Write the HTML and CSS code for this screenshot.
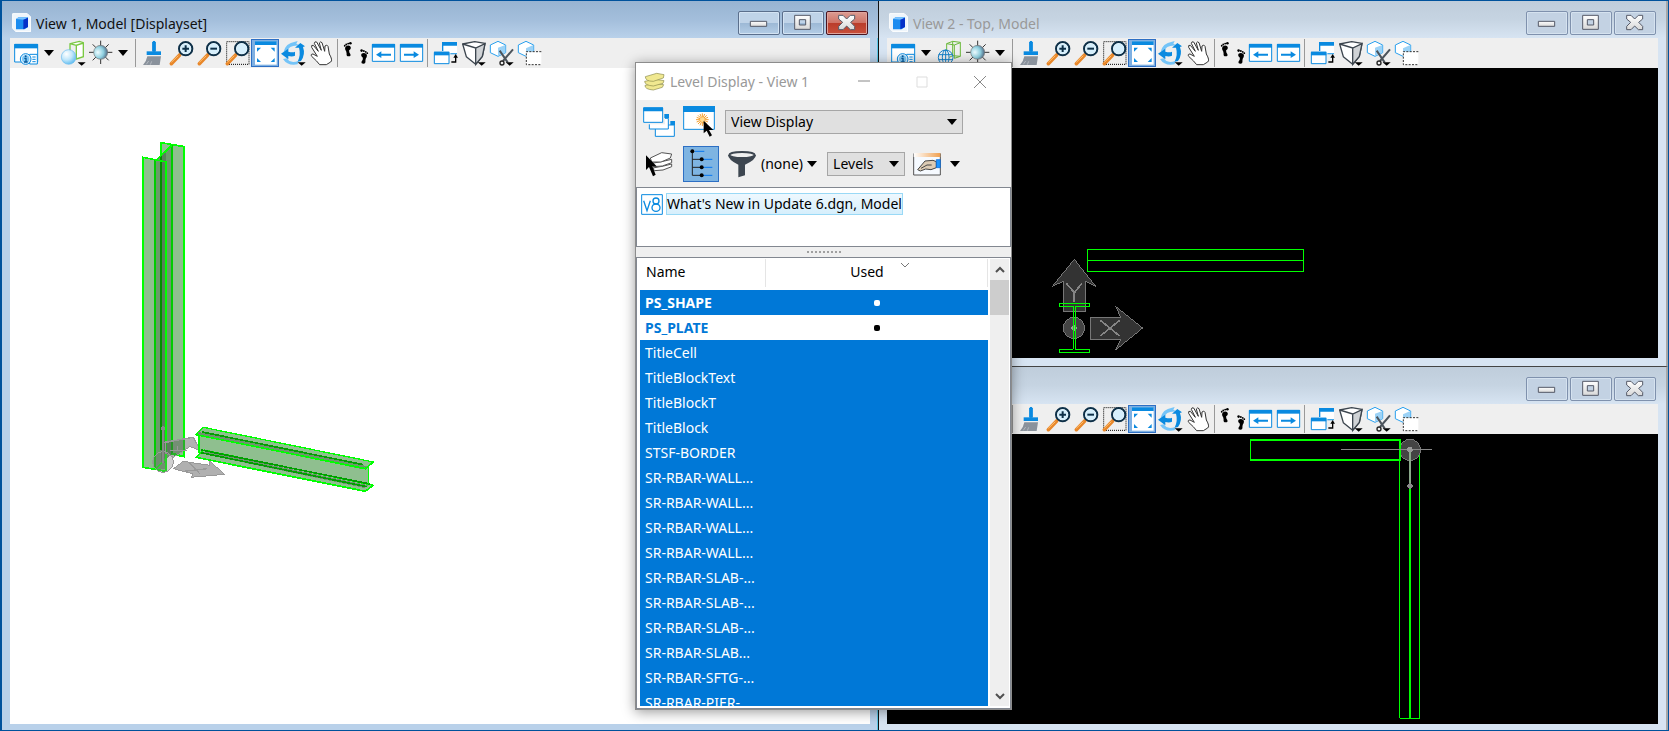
FILE: index.html
```html
<!DOCTYPE html>
<html lang="en">
<head>
<meta charset="utf-8">
<title>Model views</title>
<link rel="stylesheet" href="styles.css">
</head>
<body>
<svg class="defs" aria-hidden="true">
  <defs>
    <radialGradient id="ball" cx=".35" cy=".3" r=".8"><stop offset="0" stop-color="#fff"/><stop offset=".5" stop-color="#bfe6fb"/><stop offset="1" stop-color="#4db4ec"/></radialGradient>
    <radialGradient id="sunfill" cx=".3" cy=".5" r=".8"><stop offset="0" stop-color="#eefcff"/><stop offset=".5" stop-color="#8fd0e0"/><stop offset="1" stop-color="#3b4664"/></radialGradient>
    <linearGradient id="glyph" x2="0" y2="1"><stop offset="0" stop-color="#fff"/><stop offset="1" stop-color="#d8d8d8"/></linearGradient>
    <linearGradient id="orange" x2="1"><stop offset="0" stop-color="#fff"/><stop offset="1" stop-color="#f0a050"/></linearGradient>
  </defs>
  <symbol id="more" viewBox="0 0 84 84"><path d="M56 70H80L68 80Z" fill="#000"/></symbol>
  <symbol id="arrow" viewBox="0 0 10 6"><path d="M0 0H10L5 6Z" fill="#000"/></symbol>
  <symbol id="model" viewBox="0 0 57 57"><path d="M2 2H46L56 12V56H12L2 46Z" fill="#eef5fb" stroke="#fff" stroke-width="3"/><path d="M12 18L20 13H48V42L38 49H12Z" fill="#1b8cf0"/><path d="M12 18L20 13H48L38 20Z" fill="#7cc4ff"/><path d="M34 20L48 14V42L34 49Z" fill="#0430c8"/></symbol>
  <symbol id="info" viewBox="0 0 84 84"><path d="M5 16H74V69H5Z" fill="#fff" stroke="#0a8ae0" stroke-width="3"/><path d="M4 15H75V28H4Z" fill="#0a8ae0"/><path d="M50 46H73V75H50Z" fill="#fff" stroke="#0a8ae0" stroke-width="3"/><path d="M58 54H68M58 61H68M58 68H68" stroke="#0a8ae0" stroke-width="3"/><circle cx="38" cy="60" r="16" fill="#e4f4ff" stroke="#0a8ae0" stroke-width="3"/><circle cx="38" cy="60" r="11" fill="#7cc6f4"/><path d="M34 58H39V68M33 69H44" fill="none" stroke="#075a9c" stroke-width="4"/><circle cx="38" cy="52" r="3" fill="#075a9c"/></symbol>
  <symbol id="shaded" viewBox="0 0 84 84"><path d="M33 14L61 7L73 11V55L52 62V19Z" fill="#fff"/><path d="M33 38V14L61 7L73 11V53L52 60V19L73 12M52 19L33 14" fill="none" stroke="#7ac943" stroke-width="4"/><circle cx="29" cy="54" r="22" fill="url(#ball)" stroke="#6cbcf0" stroke-width="2"/><use href="#more" width="84" height="84"/></symbol>
  <symbol id="wire" viewBox="0 0 84 84"><path d="M32 14L50 7L73 10V52L55 58V18L73 11M55 18L32 14V36M50 7V50L73 52M50 50L40 55" fill="none" stroke="#6ab83a" stroke-width="3"/><g fill="none" stroke="#1480c8" stroke-width="3"><circle cx="29" cy="55" r="22"/><ellipse cx="29" cy="55" rx="10" ry="22"/><path d="M8 47H50M8 62H50M29 33V77"/></g><use href="#more" width="84" height="84"/></symbol>
  <symbol id="sun" viewBox="0 0 84 84"><path d="M41 5V75M6 40H76M17 16L65 64M17 64L65 16" stroke="#333" stroke-width="3"/><circle cx="41" cy="40" r="21" fill="url(#sunfill)" stroke="#777" stroke-width="2"/></symbol>
  <symbol id="brush" viewBox="0 0 84 84"><path d="M41 9Q45 4 49 9V37H41Z" fill="#0a8ae0" stroke="#0a8ae0" stroke-width="3"/><path d="M23 37H66V48H23Z" fill="#0a8ae0"/><path d="M25 52H66L62 78H12Q22 68 25 52Z" fill="#8a929c"/><path d="M22 76L29 66M34 77L38 67" stroke="#c8ccd2" stroke-width="2"/></symbol>
  <symbol id="lens" viewBox="0 0 84 84"><path d="M13 74L38 48" stroke="#e8872a" stroke-width="11" stroke-linecap="round"/><path d="M13 70L34 50" stroke="#ffc070" stroke-width="3"/><circle cx="56" cy="29" r="20" fill="#f2fbff" stroke="#0e3048" stroke-width="6"/><circle cx="56" cy="29" r="16" fill="#d6effc"/></symbol>
  <symbol id="zoomin" viewBox="0 0 84 84"><use href="#lens" width="84" height="84"/><path d="M46 29H66M56 19V39" stroke="#0e3048" stroke-width="6"/></symbol>
  <symbol id="zoomout" viewBox="0 0 84 84"><use href="#lens" width="84" height="84"/><path d="M46 29H66" stroke="#0e3048" stroke-width="6"/></symbol>
  <symbol id="area" viewBox="0 0 84 84"><path d="M11 8H78V76H11Z" fill="none" stroke="#000" stroke-width="3" stroke-dasharray="3 3"/><use href="#lens" width="84" height="84"/></symbol>
  <symbol id="fit" viewBox="0 0 84 84"><path d="M12 8H77V77H12Z" fill="#fff"/><path d="M12 7H77V18H12Z" fill="#0a8ae0"/><path d="M18 26H30L18 38ZM71 26H59L71 38ZM18 69V57L30 69ZM71 69V57L59 69Z" fill="#0a8ae0"/></symbol>
  <symbol id="rotate" viewBox="0 0 84 84"><path d="M14 38Q20 12 48 8L56 6L52 14L64 20Q30 16 24 38Z" fill="#74c4f8"/><path d="M24 58Q32 74 58 66L56 76Q26 82 12 60Z" fill="#74c4f8"/><path d="M6 44L28 29V38Q42 42 48 38V50Q40 54 28 51V61Z" fill="#0a8ae0"/><path d="M48 26L64 12L78 22L72 24Q80 46 66 66L56 68Q66 46 60 26Z" fill="#0a8ae0"/><use href="#more" width="84" height="84"/></symbol>
  <symbol id="hand" viewBox="0 0 84 84"><path d="M38 77Q30 66 14 52Q10 45 18 45L31 52L14 25Q12 17 19 19L34 37L22 13Q23 6 29 9L43 34L37 12Q40 6 45 11L53 37L54 21Q60 15 63 22L67 45Q78 64 71 69L58 77Z" fill="#fff" stroke="#333" stroke-width="3" stroke-linejoin="round"/></symbol>
  <symbol id="foot" viewBox="0 0 28 48"><path d="M6 16Q14 9 21 15Q25 22 17 27Q16 33 21 39Q23 46 15 46Q8 46 9 36Q9 30 5 25Q3 20 6 16Z"/><circle cx="3" cy="13" r="3"/><circle cx="8" cy="9" r="3"/><circle cx="14" cy="6" r="3"/><circle cx="21" cy="5" r="4"/></symbol>
  <symbol id="walk" viewBox="0 0 84 84"><use href="#foot" x="8" y="8" width="27" height="46"/><use href="#foot" x="-82" y="30" width="27" height="46" transform="scale(-1 1)"/></symbol>
  <symbol id="frame" viewBox="0 0 84 84"><path d="M10 16H77V67H10Z" fill="#fff" stroke="#0a8ae0" stroke-width="3"/><path d="M9 15H78V26H9Z" fill="#0a8ae0"/></symbol>
  <symbol id="prev" viewBox="0 0 84 84"><use href="#frame" width="84" height="84"/><path d="M21 47L37 37V44H66V50H37V57Z" fill="#0a8ae0"/></symbol>
  <symbol id="next" viewBox="0 0 84 84"><use href="#frame" width="84" height="84"/><path d="M66 47L50 37V44H21V50H50V57Z" fill="#0a8ae0"/></symbol>
  <symbol id="copyview" viewBox="0 0 84 84"><path d="M34 12H78V44H34Z" fill="#fff"/><path d="M33 9H78V20H33ZM33 20H37V36H33ZM58 43H78V46H58Z" fill="#0a8ae0"/><path d="M10 40H54V74H10Z" fill="#fff" stroke="#0a8ae0" stroke-width="3"/><path d="M9 38H55V49H9Z" fill="#0a8ae0"/><path d="M61 69H74V53" fill="none" stroke="#000" stroke-width="4"/><path d="M74 45L81 56H67Z"/></symbol>
  <symbol id="persp" viewBox="0 0 84 84"><path d="M11 15L47 8L78 13L70 52L50 76L22 53Z" fill="#fff" stroke="#3c454e" stroke-width="4" stroke-linejoin="round"/><path d="M50 26L78 14L70 52L50 76Z" fill="#d0d3d6"/><path d="M11 15L50 27L78 14L70 52L50 76V27" fill="none" stroke="#3c454e" stroke-width="4"/><use href="#more" width="84" height="84"/></symbol>
  <symbol id="clip" viewBox="0 0 84 84"><path d="M33 7L56 18V41L33 52L10 41V18Z" fill="#fff" stroke="#2aa0ee" stroke-width="3"/><path d="M33 26L55 18V41L33 51Z" fill="#9cd2f6"/><path d="M78 31L48 66M38 35L62 70" stroke="#4c545c" stroke-width="6"/><circle cx="45" cy="72" r="6" fill="none" stroke="#222" stroke-width="4"/><use href="#more" width="84" height="84"/></symbol>
  <symbol id="mask" viewBox="0 0 84 84"><path d="M33 7L56 18V41L33 52L10 41V18Z" fill="#fff" stroke="#2aa0ee" stroke-width="3"/><path d="M33 28L55 18V41H33Z" fill="#9cd2f6"/><path d="M34 38H79V77H34Z" fill="#fff"/><path d="M79 38H34V77H79" fill="none" stroke="#333" stroke-width="3" stroke-dasharray="6 4"/></symbol>
  <symbol id="wmin" viewBox="0 0 126 72"><path d="M37 31H86V46H37Z" fill="url(#glyph)" stroke="#555a68" stroke-width="3"/></symbol>
  <symbol id="wmax" viewBox="0 0 126 72"><path fill-rule="evenodd" d="M38 13H85V55H38ZM52 26V42H71V26Z" fill="url(#glyph)" stroke="#555a68" stroke-width="3"/></symbol>
  <symbol id="wclose" viewBox="0 0 126 72"><path d="M38 13H51L62 24L73 13H86V24L74 34L86 46V56H73L62 45L51 56H38V46L50 34L38 24Z" fill="url(#glyph)" stroke="#555a68" stroke-width="3"/></symbol>
</svg>

<template id="caption-buttons">
  <button type="button" aria-label="Minimize"><svg><use href="#wmin"/></svg></button>
  <button type="button" aria-label="Maximize"><svg><use href="#wmax"/></svg></button>
  <button type="button" class="close" aria-label="Close"><svg><use href="#wclose"/></svg></button>
</template>

<main class="desktop">
  <section class="view active" data-style="shaded">
    <header class="caption"><svg class="model-icon"><use href="#model"/></svg><h2>View 1, Model [Displayset]</h2><div class="caption-buttons"></div></header>
    <div class="toolbar" role="toolbar" aria-label="View 1 controls"></div>
    <div class="canvas">
      <svg class="drawing"><g transform="translate(120 62) scale(.33333)" stroke-width="4">
        <path d="M93 38L163 50V980L93 968Z" fill="#8fbf8f" stroke="#0f0"/>
        <path d="M78 92L126 45V970L78 1016Z" fill="#6a9a6a"/>
        <path d="M39 82L109 96V1024L39 1012Z" fill="#8fbf8f"/>
        <path d="M75 90H109V1018L75 1016Z" fill="#6a9a6a"/>
        <path d="M93 68H107V1000H93Z" fill="#587f58"/>
        <path d="M94 75V960" stroke="#009000" stroke-width="6"/>
        <path d="M126 45V972" stroke="#0c0" stroke-width="6"/>
        <path d="M75 90V1014" stroke="#0c0" stroke-width="6"/>
        <path d="M39 82L109 96V1024L39 1012ZM78 92L126 45M93 75V38L163 50V980L126 970M78 1016L109 985" fill="none" stroke="#0f0" stroke-width="5"/>
        <path d="M109 96V1024" stroke="#0f0" stroke-width="6"/>
        <path d="M107 938L190 922L212 962L180 950L130 982L106 970Z" fill="#555" fill-opacity=".45" stroke="#999" stroke-width="3"/>
        <path d="M96 938L190 922L212 962M120 962H172M142 948V960" fill="none" stroke="#999" stroke-width="4"/>
        <path d="M130 1016L160 994L240 1006V994L284 1033L182 1042L190 1032Z" fill="#b0b0b0" stroke="#999" stroke-width="3"/>
        <path d="M160 1024L232 1016M178 998L210 1032" stroke="#999" stroke-width="4"/>
        <circle cx="99" cy="996" r="31" fill="#777" fill-opacity=".35" stroke="#999" stroke-width="3"/>
        <path d="M99 896V1000" stroke="#888" stroke-width="5"/><circle cx="99" cy="896" r="7" fill="#888"/>
        <path d="M220 892L730 996L706 1016L198 914Z" fill="#8fbf8f" stroke="#0f0"/>
        <path d="M208 905L716 1008V1062L208 968Z" fill="#8fbf8f"/>
        <path d="M206 906L714 1009L700 1018L200 916Z" fill="#6f916f"/>
        <path d="M222 960L730 1066L706 1084L198 982Z" fill="#8fbf8f" stroke="#0f0"/>
        <path d="M226 964L716 1066L704 1074L210 970Z" fill="#6f916f"/>
        <path d="M216 906L700 1004M214 960L720 1062M212 968L710 1070" stroke="#00a000" stroke-width="5"/>
        <path d="M198 914L706 1016L730 996M198 982L706 1084L730 1066M208 916V970M716 1008V1062" fill="none" stroke="#0f0" stroke-width="5"/>
      </g></svg>
    </div>
  </section>
  <section class="view view-top" data-style="wire">
    <header class="caption"><svg class="model-icon"><use href="#model"/></svg><h2>View 2 - Top, Model</h2><div class="caption-buttons"></div></header>
    <div class="toolbar" role="toolbar" aria-label="View 2 controls"></div>
    <div class="canvas">
      <svg class="drawing"><g transform="translate(123 162) scale(.33333)" fill="none" stroke-width="3">
        <path d="M193 88L257 169L227 154V244H160V154L127 169Z" fill="#333" stroke="#777"/>
        <path d="M241 262H332L317 229L398 294L317 360L332 328H241Z" fill="#333" stroke="#777"/>
        <path d="M169 160L193 188L216 160M193 188V216M271 271L329 318M329 271L271 318" stroke="#858585" stroke-width="5"/>
        <circle cx="192" cy="294" r="32" fill="#444" stroke="#777"/>
        <circle cx="192" cy="294" r="8" fill="#999"/>
        <path d="M232 58H881V124H232ZM232 91H881M148 220H239V229H196V358H239V367H148V358H190V229H148Z" stroke="#0f0"/>
      </g></svg>
    </div>
  </section>
  <section class="view view-front" data-style="wire">
    <header class="caption"><svg class="model-icon"><use href="#model"/></svg><h2>View 3</h2><div class="caption-buttons"></div></header>
    <div class="toolbar" role="toolbar" aria-label="View 3 controls"></div>
    <div class="canvas">
      <svg class="drawing"><g transform="translate(343 -84) scale(.33333)" fill="none">
        <path d="M509 330V1105H569V300" stroke="#0f0" stroke-width="3"/>
        <path d="M540 300V1105" stroke="#0f0" stroke-width="6"/>
        <circle cx="540" cy="300" r="32" fill="#444" stroke="#777" stroke-width="3"/>
        <path d="M62 270H511V330H62Z" stroke="#0f0" stroke-width="5"/>
        <path d="M333 298H606" stroke="#888" stroke-width="3"/>
        <path d="M540 298V408" stroke="#8aa88a" stroke-width="6"/>
        <circle cx="540" cy="299" r="8" fill="#999"/><circle cx="540" cy="408" r="8" fill="#888"/>
      </g></svg>
    </div>
  </section>

  <section class="dialog" role="dialog" aria-labelledby="dialog-title">
    <header class="dialog-caption">
      <svg class="layers" viewBox="0 0 63 57"><g fill="#f0e890" stroke="#8a8a4a" stroke-width="2"><path d="M3 40L34 34L59 38L55 46L28 54Q2 52 3 40Z"/><path d="M2 28L34 22L60 26L57 34L28 42Q2 40 2 28Z"/><path d="M4 14L38 4L60 8L58 18L28 28Q4 28 4 14Z"/></g></svg>
      <h2 id="dialog-title">Level Display - View 1</h2>
      <button type="button" aria-label="Minimize"><svg viewBox="0 0 12 12"><path d="M0 5H12"/></svg></button>
      <button type="button" class="disabled" aria-label="Maximize" disabled><svg viewBox="0 0 12 12"><path d="M1 1H11V11H1Z"/></svg></button>
      <button type="button" aria-label="Close"><svg viewBox="0 0 12 12"><path d="M0 0L12 12M12 0L0 12"/></svg></button>
    </header>
    <div class="dialog-tools">
      <div class="tool-row">
        <button type="button" class="icon32" aria-label="Apply to open views"><svg viewBox="0 0 96 96"><g fill="#fff" stroke="#0a8ae0" stroke-width="3"><path d="M37 57H94V91H37Z"/><path d="M19 37H76V69H19Z"/></g><path d="M0 0H66V55H0Z" fill="#efefef"/><path d="M2 6H59V49H2Z" fill="#fff" stroke="#0a8ae0" stroke-width="3"/><path d="M1 4H60V16H1ZM64 24H78V36H64ZM82 45H96V57H82Z" fill="#0a8ae0"/></svg></button>
        <button type="button" class="icon32" aria-label="Change level display"><svg viewBox="0 0 96 96"><path d="M2 2H94V70H2Z" fill="#fff" stroke="#0a8ae0" stroke-width="3"/><path d="M0 0H96V18H0Z" fill="#0a8ae0"/><path d="M58 22V60M39 41H77M45 28L71 54M71 28L45 54M51 24L65 58M65 24L51 58M41 34L75 48M41 48L75 34" stroke="#f5a030" stroke-width="3"/><circle cx="58" cy="41" r="7" fill="#ffdc90"/><path d="M62 44V82L71 74L80 92L87 88L78 72H91Z"/></svg></button>
        <label class="dropdown wide"><select aria-label="Display mode"><option>View Display</option></select><svg><use href="#arrow"/></svg></label>
      </div>
      <div class="tool-row">
        <button type="button" class="icon32" aria-label="Select level"><svg viewBox="0 0 96 96"><g fill="#fff" stroke="#555" stroke-width="3"><path d="M30 60L62 54L86 48V56L60 66L34 68Z"/><path d="M26 46L60 40L86 34V44L58 54L30 56Z"/><path d="M22 30L56 14L86 18L82 30L54 42L26 42Z"/></g><path d="M9 22V66L18 57L30 85L38 80L28 55H41Z"/></svg></button>
        <button type="button" class="icon36 pressed" aria-label="Show target tree" aria-pressed="true"><svg viewBox="0 0 108 108"><path d="M28 16V88H54M28 40H54M28 64H54" fill="none" stroke="#222" stroke-width="3"/><path d="M36 16H64M60 40H88M60 64H88M60 88H88" stroke="#0878f0" stroke-width="3"/><circle cx="28" cy="16" r="6"/><circle cx="56" cy="40" r="6"/><circle cx="56" cy="64" r="6"/><circle cx="56" cy="88" r="6"/></svg></button>
        <button type="button" class="filter"><svg class="funnel" viewBox="0 0 90 84"><path d="M3 15Q4 30 34 44V82L54 76V44Q86 30 87 15Z" fill="#3d4650"/><ellipse cx="45" cy="15" rx="38" ry="9" fill="#efefef" stroke="#3d4650" stroke-width="6"/></svg><span>(none)</span><svg class="arr"><use href="#arrow"/></svg></button>
        <label class="dropdown narrow"><select aria-label="List type"><option>Levels</option></select><svg><use href="#arrow"/></svg></label>
        <button type="button" class="filter symbology" aria-label="Symbology"><svg class="card" viewBox="0 0 84 69"><path d="M2 2H82V66H2Z" fill="#f6faff" stroke="#555" stroke-width="3"/><path d="M2 0H82V12H2Z" fill="url(#orange)"/><path d="M14 50L36 24L60 22L70 26V44L54 50L38 48L22 54Z" fill="#dccbb4" stroke="#444" stroke-width="3"/><path d="M24 46L42 36H56" stroke="#444" stroke-width="3" fill="none"/><path d="M70 20H82V44H70Z" fill="#1c94ff" stroke="#0060d0" stroke-width="2"/></svg><svg class="arr"><use href="#arrow"/></svg></button>
      </div>
    </div>
    <div class="tree"><div class="tree-item"><svg class="v8" viewBox="0 0 66 63"><path d="M2 2H64V61H2Z" fill="#fff" stroke="#0a8ae0" stroke-width="3"/><path d="M8 20L18 50L28 20" fill="none" stroke="#0a8ae0" stroke-width="4"/><ellipse cx="45" cy="21" rx="9" ry="9" fill="none" stroke="#0a8ae0" stroke-width="4"/><ellipse cx="45" cy="41" rx="12" ry="11" fill="none" stroke="#0a8ae0" stroke-width="4"/></svg><span>What's New in Update 6.dgn, Model</span></div></div>
    <div class="splitter"><span></span></div>
    <div class="levels">
      <div class="table-clip">
        <table>
          <thead><tr><th scope="col" class="name">Name</th><th scope="col"><div class="used">Used<svg viewBox="0 0 10 6"><path d="M1 1L5 5L9 1"/></svg></div></th></tr></thead>
          <tbody>
            <tr class="bold"><td>PS_SHAPE</td><td><i class="dot"></i></td></tr>
            <tr class="bold off"><td>PS_PLATE</td><td><i class="dot"></i></td></tr>
            <tr><td>TitleCell</td><td></td></tr>
            <tr><td>TitleBlockText</td><td></td></tr>
            <tr><td>TitleBlockT</td><td></td></tr>
            <tr><td>TitleBlock</td><td></td></tr>
            <tr><td>STSF-BORDER</td><td></td></tr>
            <tr><td>SR-RBAR-WALL...</td><td></td></tr>
            <tr><td>SR-RBAR-WALL...</td><td></td></tr>
            <tr><td>SR-RBAR-WALL...</td><td></td></tr>
            <tr><td>SR-RBAR-WALL...</td><td></td></tr>
            <tr><td>SR-RBAR-SLAB-...</td><td></td></tr>
            <tr><td>SR-RBAR-SLAB-...</td><td></td></tr>
            <tr><td>SR-RBAR-SLAB-...</td><td></td></tr>
            <tr><td>SR-RBAR-SLAB...</td><td></td></tr>
            <tr><td>SR-RBAR-SFTG-...</td><td></td></tr>
            <tr><td>SR-RBAR-PIER-</td><td></td></tr>
          </tbody>
        </table>
      </div>
      <div class="scrollbar">
        <button type="button" aria-label="Scroll up"><svg viewBox="0 0 10 8"><path d="M1 6L5 2L9 6"/></svg></button>
        <div class="thumb"></div>
        <button type="button" class="down" aria-label="Scroll down"><svg viewBox="0 0 10 8"><path d="M1 2L5 6L9 2"/></svg></button>
      </div>
    </div>
  </section>
</main>
<script src="views.js"></script>
</body>
</html>
```
FILE: views.js
```js
// Every view carries the same control strip; only the display-style icon varies.
const tools = [
  ['info', 'View Attributes'], ['arrow'], ['style', 'Display Style'], ['sun', 'Brightness'], ['arrow'], null,
  ['brush', 'Update View'], ['zoomin', 'Zoom In'], ['zoomout', 'Zoom Out'], ['area', 'Window Area'],
  ['fit', 'Fit View'], ['rotate', 'Rotate View'], ['hand', 'Pan View'], null,
  ['walk', 'Walk'], ['prev', 'View Previous'], ['next', 'View Next'], null,
  ['copyview', 'Copy View'], ['persp', 'View Perspective'], ['clip', 'Clip Volume'], ['mask', 'Clip Mask']
];

document.querySelectorAll('.view').forEach(view => {
  view.querySelector('.toolbar').innerHTML = tools.map(tool => {
    if (!tool) return '<span class="sep"></span>';
    const [name, label] = tool;
    const icon = name === 'style' ? view.dataset.style : name;
    return `<button type="button" class="tool tool-${name}" aria-label="${label || 'More options'}"><svg><use href="#${icon}"/></svg></button>`;
  }).join('');
  view.querySelector('.caption-buttons')
    .append(document.getElementById('caption-buttons').content.cloneNode(true));
});
```
FILE: styles.css
```css
* { box-sizing: border-box; }
body { margin: 0; height: 100vh; overflow: hidden; background: #00529c; font: 14px/20px "Noto Sans", "Open Sans", sans-serif; color: #000; }
h2 { margin: 0; font: inherit; white-space: nowrap; }
button { margin: 0; padding: 0; border: 0; background: none; font: inherit; color: inherit; }
svg { display: block; flex: none; }
.defs { position: absolute; width: 0; height: 0; }

.desktop { position: relative; height: 100vh; padding: 1px 1px 1px 2px; display: grid; grid-template-columns: 877fr 789fr; grid-template-rows: 366fr 363fr; }
.view { display: flex; flex-direction: column; min-width: 0; min-height: 0; padding: 0 8px 6px; background: #d7e4f2; border-right: 2px solid #a8a8a8; }
.view.active { grid-row: span 2; background: #b9d1ea; border-right: 1px solid #111; box-shadow: inset -1px 0 #5cc8e8; }
.view-top { padding-bottom: 8px; border-bottom: 1px solid #444; }
.caption { flex: none; height: 37px; margin: 0 -8px; padding: 6px 10px 0; display: flex; align-items: center; gap: 5px; background: linear-gradient(#bfcddb, #c6d4e2 50%, #d7e4f2); color: #999; }
.active .caption { background: linear-gradient(#98b4d2, #a3bedb 50%, #b9d1ea); color: #111; }
.model-icon { width: 19px; height: 19px; }
.caption h2 { flex: 1; padding-top: 2px; }
.caption-buttons { display: flex; gap: 2px; }
.caption-buttons button { width: 42px; height: 24px; border: 1px solid #7f91ad; border-radius: 2px; background: #c3d2e3; box-shadow: inset 0 0 0 1px #d5e2ef; }
.caption-buttons svg { width: 42px; height: 24px; margin: -1px; }
.active .caption-buttons button { border-color: #5b6f8c; background: linear-gradient(#bfd3e8 50%, #9cb8d5 50%, #b4cde6); box-shadow: inset 0 0 0 1px #d3e3f3; }
.active .caption-buttons .close { border-color: #4a1420; background: linear-gradient(#dc9c92, #cf7467 48%, #ba3c2a 50%, #c8503c); box-shadow: inset 0 0 0 1px #e0a49c; }

.toolbar { flex: none; height: 30px; padding: 0 3px; display: flex; align-items: center; background: #efefef; overflow: hidden; }
.tool { width: 28px; height: 28px; flex: none; display: grid; place-items: center; }
.tool svg { width: 28px; height: 28px; }
.tool-arrow { width: 16px; margin-right: 2px; }
.tool-arrow svg { width: 10px; height: 6px; }
.tool-fit { background: #7eb0e2; box-shadow: inset 0 0 0 1px #2d6fc4; }
.sep { flex: none; width: 6px; height: 28px; background: linear-gradient(#999, #999) 2px 0 / 1px 100% no-repeat; }
.canvas { flex: 1; min-height: 0; background: #000; }
.active .canvas { background: #fff; }
.drawing { width: 100%; height: 100%; shape-rendering: crispEdges; }

.dialog { position: absolute; left: 635px; top: 62px; width: 377px; height: 648px; display: flex; flex-direction: column; background: #efefef; border: 1px solid #8c8c8c; box-shadow: 0 2px 12px rgba(0, 0, 0, .4); }
.dialog-caption { flex: none; height: 37px; padding: 0 2px 0 8px; display: flex; align-items: center; background: #fff; color: #999; }
.layers { width: 21px; height: 19px; margin-right: 5px; }
.dialog-caption h2 { flex: 1; }
.dialog-caption button { width: 58px; height: 34px; display: grid; place-items: center; }
.dialog-caption button svg { width: 12px; height: 12px; fill: none; stroke: #888; }
.dialog-caption .disabled svg { stroke: #ddd; }
.dialog-tools { flex: none; display: flex; flex-direction: column; gap: 8px; padding: 6px 7px 5px; }
.tool-row { display: flex; align-items: center; gap: 8px; }
.icon32 svg { width: 32px; height: 32px; }
.icon36 svg { width: 36px; height: 36px; }
.pressed { background: #7eb4e2; box-shadow: inset 0 0 0 1px #2d6fc4; }
.dropdown { position: relative; height: 24px; margin-left: 2px; }
.dropdown select { appearance: none; width: 100%; height: 24px; margin: 0; padding: 0 24px 0 5px; border: 1px solid #a6a6a6; border-radius: 0; background: #e0e0e0; font: inherit; color: #000; }
.dropdown svg { position: absolute; right: 6px; top: 9px; width: 10px; height: 6px; pointer-events: none; }
.wide { width: 238px; }
.narrow { width: 78px; }
.filter { display: flex; align-items: center; gap: 4px; white-space: nowrap; }
.funnel { width: 30px; height: 28px; }
.arr { width: 10px; height: 6px; }
.symbology { gap: 9px; }
.card { width: 28px; height: 23px; }

.tree { flex: none; height: 60px; padding: 5px 4px; background: #fff; border: 1px solid #828790; }
.tree-item { display: flex; align-items: center; gap: 3px; }
.tree-item span { height: 22px; border: 1px solid #99d9f6; background: linear-gradient(#eef8fe, #d6effc); white-space: nowrap; }
.v8 { width: 22px; height: 21px; }
.splitter { flex: none; height: 10px; display: grid; place-items: center; }
.splitter span { width: 34px; height: 2px; background: repeating-linear-gradient(90deg, #a0a0a0 0 2px, transparent 2px 4px); }

.levels { flex: 1; min-height: 0; display: flex; gap: 2px; padding: 1px 1px 2px 3px; background: #fff; border: 1px solid #828790; }
.table-clip { flex: 1; overflow: hidden; }
table { width: 100%; table-layout: fixed; border-collapse: collapse; }
th { height: 31px; padding: 0 0 6px 6px; text-align: left; font-weight: normal; background: linear-gradient(#e5e5e5, #e5e5e5) right top / 1px 28px no-repeat; }
.name { width: 126px; }
.used { display: flex; justify-content: center; gap: 16px; }
.used svg { width: 10px; height: 6px; fill: none; stroke: #777; }
td { height: 25px; padding: 0 5px; background: #0078d7; color: #fff; white-space: nowrap; }
.bold { font-weight: bold; }
.off td { background: #fff; color: #0078d7; }
.dot { display: block; width: 6px; height: 6px; margin: 0 auto; border-radius: 2px; background: #fff; }
.off .dot { background: #000; }
.scrollbar { width: 19px; display: flex; flex-direction: column; background: #efefef; }
.scrollbar button { height: 21px; display: grid; place-items: center; }
.scrollbar button svg { width: 10px; height: 8px; fill: none; stroke: #505050; stroke-width: 2; }
.thumb { height: 35px; background: #cdcdcd; }
.scrollbar .down { margin-top: auto; }
```
